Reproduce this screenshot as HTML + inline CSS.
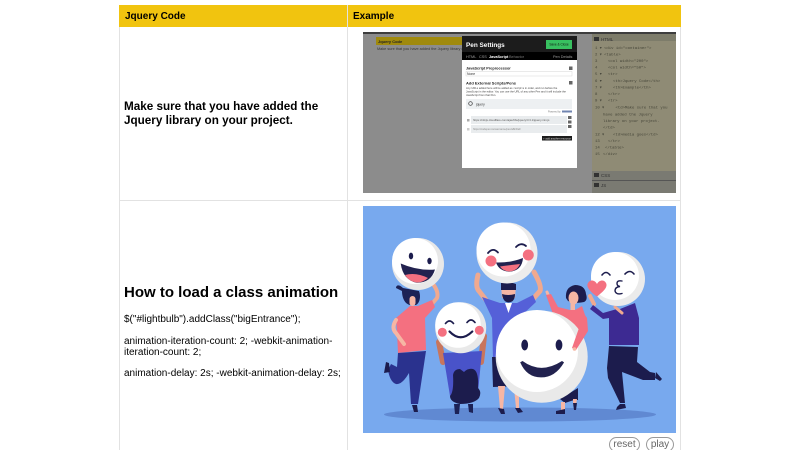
<!DOCTYPE html>
<html><head><meta charset="utf-8"><style>
html,body{margin:0;padding:0;background:#fff;width:800px;height:450px;overflow:hidden}
body{font-family:"Liberation Sans",sans-serif;color:#000;position:relative}
.a{position:absolute;white-space:nowrap}
.btn{position:absolute;border:1px solid #999;border-radius:10px;color:#666;font-size:10px;line-height:14px;height:13px;text-align:center;top:437px;box-sizing:content-box}
</style></head><body>
<div class="a" style="left:119px;top:5px;width:562px;height:22px;background:#f1c40f"></div>
<div class="a" style="left:347px;top:5px;width:1px;height:445px;background:#e2e2e2"></div>
<div class="a" style="left:119px;top:27px;width:1px;height:423px;background:#e2e2e2"></div>
<div class="a" style="left:680px;top:27px;width:1px;height:423px;background:#e2e2e2"></div>
<div class="a" style="left:119px;top:200px;width:562px;height:1px;background:#e2e2e2"></div>
<div class="a" style="left:125px;top:10px;font-size:10px;font-weight:bold;line-height:14px">Jquery Code</div>
<div class="a" style="left:353px;top:10px;font-size:10px;font-weight:bold;line-height:14px">Example</div>
<div class="a" style="left:124px;top:100px;font-size:11.7px;font-weight:bold;line-height:14px">Make sure that you have added the<br>Jquery library on your project.</div>
<div class="a" style="left:124px;top:283px;font-size:15px;font-weight:bold;line-height:20px">How to load a class animation</div>
<div class="a" style="left:124px;top:313px;font-size:10px;line-height:13px">$("#lightbulb").addClass("bigEntrance");</div>
<div class="a" style="left:124px;top:335.500px;font-size:10px;line-height:11px">animation-iteration-count: 2; -webkit-animation-<br>iteration-count: 2;</div>
<div class="a" style="left:124px;top:366.500px;font-size:10px;line-height:13px">animation-delay: 2s; -webkit-animation-delay: 2s;</div>

<svg class="a" style="left:0;top:0" width="800" height="450" viewBox="0 0 800 450">
<defs>
<filter id="b1" x="-5%" y="-5%" width="110%" height="110%"><feGaussianBlur stdDeviation="0.35"/></filter>
<filter id="b2" x="-5%" y="-5%" width="110%" height="110%"><feGaussianBlur stdDeviation="0.35"/></filter>
</defs>

<g filter="url(#b1)">
<rect x="363" y="32" width="313" height="161" fill="#8c8c8c"/>
<rect x="363" y="32" width="313" height="2" fill="#3c3c3c"/>
<rect x="376" y="37" width="87" height="8" fill="#a08a10"/>
<text x="378" y="43" font-size="4" font-weight="bold" fill="#222">Jquery Code</text>
<text x="377" y="50" font-size="3.8" fill="#333">Make sure that you have added the Jquery library on</text>
<rect x="592" y="34" width="84" height="159" fill="#8f8b74"/>
<rect x="592" y="34" width="84" height="7" fill="#7d7b6a"/>
<rect x="594" y="37" width="5" height="4" fill="#333"/>
<text x="601" y="41" font-size="4.5" fill="#333">HTML</text>
<g font-family="Liberation Mono,monospace" font-size="3.95" fill="#45453a">
<text x="595" y="49">1 ▾ &lt;div id="container"&gt;</text>
<text x="595" y="55.500">2 ▾ &lt;table&gt;</text>
<text x="595" y="62">3</text><text x="608" y="62">&lt;col width="200"&gt;</text>
<text x="595" y="68.500">4</text><text x="608" y="68.500">&lt;col width="50"&gt;</text>
<text x="595" y="75">5 ▾</text><text x="608" y="75">&lt;tr&gt;</text>
<text x="595" y="82">6 ▾</text><text x="613" y="82">&lt;th&gt;Jquery Code&lt;/th&gt;</text>
<text x="595" y="88.500">7 ▾</text><text x="613" y="88.500">&lt;th&gt;Example&lt;/th&gt;</text>
<text x="595" y="95">8</text><text x="608" y="95">&lt;/tr&gt;</text>
<text x="595" y="101.500">9 ▾</text><text x="608" y="101.500">&lt;tr&gt;</text>
<text x="595" y="108.500">10 ▾</text><text x="615.500" y="108.500">&lt;td&gt;Make sure that you</text>
<text x="603" y="115.500">have added the Jquery</text>
<text x="603" y="122">library on your project.</text>
<text x="603" y="128.500">&lt;/td&gt;</text>
<text x="595" y="135.500">12 ▾</text><text x="613" y="135.500">&lt;td&gt;media goes&lt;/td&gt;</text>
<text x="595" y="142">13</text><text x="608" y="142">&lt;/tr&gt;</text>
<text x="595" y="148.500">14</text><text x="605" y="148.500">&lt;/table&gt;</text>
<text x="595" y="155">15</text><text x="603" y="155">&lt;/div&gt;</text>
</g>
<rect x="592" y="171" width="84" height="9" fill="#7a7a72"/>
<rect x="592" y="180" width="84" height="1" fill="#555"/>
<rect x="592" y="181" width="84" height="12" fill="#7a7a72"/>
<rect x="594" y="173" width="5" height="4" fill="#333"/>
<rect x="594" y="183" width="5" height="4" fill="#333"/>
<text x="601" y="177" font-size="4.5" fill="#333">CSS</text>
<text x="601" y="187" font-size="4.5" fill="#333">JS</text>

<rect x="462" y="36" width="115" height="132" fill="#fff"/>
<rect x="462" y="36" width="115" height="24" fill="#1a1a1a"/>
<rect x="462" y="52" width="115" height="8" fill="#050505"/>
<text x="466" y="47" font-size="6.400" font-weight="bold" fill="#fff">Pen Settings</text>
<rect x="546" y="40" width="26" height="9" fill="#38c060"/>
<text x="559" y="45.500" font-size="3.200" text-anchor="middle" fill="#111">Save &amp; Close</text>
<g font-size="3.800" fill="#999"><text x="466" y="58">HTML</text><text x="479" y="58">CSS</text><text x="489" y="58" fill="#fff" font-weight="bold">JavaScript</text><text x="509" y="58" fill="#777">Behavior</text><text x="553" y="58">Pen Details</text></g>
<text x="466" y="69.500" font-size="3.800" font-weight="bold" fill="#222">JavaScript Preprocessor</text>
<rect x="569" y="66.500" width="3.500" height="3.500" fill="#666"/>
<rect x="466" y="71.500" width="106" height="4.500" fill="#fff" stroke="#ccc" stroke-width=".4"/>
<text x="467" y="75" font-size="3.400" fill="#333">None</text>
<text x="466" y="84.500" font-size="4" font-weight="bold" fill="#222">Add External Scripts/Pens</text>
<rect x="569" y="81" width="3.500" height="3.500" fill="#666"/>
<g font-size="2.700" fill="#444"><text x="466" y="89">Any URLs added here will be added as &lt;script&gt;s in order, and run before the</text><text x="466" y="92.500">JavaScript in the editor. You can use the URL of any other Pen and it will include the</text><text x="466" y="96">JavaScript from that Pen.</text></g>
<rect x="466" y="99" width="106" height="10" fill="#edf0f2"/>
<circle cx="470.500" cy="103.500" r="1.800" fill="none" stroke="#333" stroke-width=".7"/>
<text x="476" y="105.500" font-size="3.200" fill="#333">jquery</text>
<text x="548" y="112.500" font-size="2.400" fill="#777">Powered by</text><rect x="562" y="110.500" width="10" height="2" fill="#6f84b0"/>
<rect x="471" y="116" width="96" height="8" fill="#e9ecee"/>
<text x="473" y="121" font-size="2.800" fill="#555">https://cdnjs.cloudflare.com/ajax/libs/jquery/3.3.1/jquery.min.js</text>
<rect x="467" y="119" width="2.500" height="2.500" fill="#aaa"/>
<rect x="568" y="116" width="3.500" height="3" fill="#666"/><rect x="568" y="120.500" width="3.500" height="3" fill="#666"/>
<rect x="471" y="125" width="96" height="8" fill="#e9ecee"/>
<text x="473" y="130" font-size="2.600" fill="#888">https://codepen.io/username/pen/aBcDeF</text>
<rect x="467" y="128" width="2.500" height="2.500" fill="#ccc"/>
<rect x="568" y="125" width="3.500" height="3" fill="#666"/>
<rect x="542" y="136" width="30" height="4.500" fill="#1a1a1a"/>
<text x="557" y="139.500" font-size="2.700" text-anchor="middle" fill="#ddd">+ add another resource</text>
</g>

<g filter="url(#b2)">
<rect x="363" y="206" width="313" height="227" fill="#78a9ee"/>
<ellipse cx="520" cy="414.500" rx="136" ry="7" fill="#6189d2"/>

<!-- person 1 -->
<path d="M433 284Q439 292 437 298L431 305" fill="none" stroke="#f0a98f" stroke-width="4" stroke-linecap="round"/>
<path d="M403 288C399 284 396 285 396 288L402 291C402 298 405 304 410 305L416 305C420 303 421 296 419 291Z" fill="#1e2056"/>
<rect x="409.500" y="296" width="6" height="10" rx="3" fill="#f6b6a4"/>
<path d="M396 318L410 306L418 306L432 300L435 307L425 318L426 350L398 353L397 332Z" fill="#f46f80"/>
<path d="M396 320Q391 328 396 333L404 344" fill="none" stroke="#f6b6a4" stroke-width="4" stroke-linecap="round"/>
<path d="M398 353L426 351L418 404L411 404L409 373Q402 385 396 384Q390 382 388 370L391 364L397 367Z" fill="#2b328e"/>
<path d="M386 362L389 363L390 372L384 373Z" fill="#1e1f4d"/>
<path d="M412 405L417 405L418 412L414 412Z" fill="#1e1f4d"/>
<!-- face 1 -->
<circle cx="418" cy="264" r="26" fill="#e8e8e8"/>
<circle cx="415" cy="261" r="23" fill="#fff"/>
<ellipse cx="411" cy="256" rx="2.200" ry="3.400" fill="#1e1f4d"/>
<ellipse cx="429.500" cy="261" rx="2.200" ry="3.200" fill="#1e1f4d"/>
<path d="M400.700 263.500Q418 271 435 269.500Q431 283 416.500 282.700Q403 280 400.700 263.500Z" fill="#22244f"/>
<path d="M405 275Q416 272 428 278Q423 282.500 416.500 282.500Q409 281.500 405 275Z" fill="#f46f80"/>

<!-- centre man -->
<path d="M478 275Q475 287 479 291L486 300" fill="none" stroke="#f0a98f" stroke-width="5" stroke-linecap="round"/>
<path d="M534 272Q542 286 540 291L532 300" fill="none" stroke="#f0a98f" stroke-width="5" stroke-linecap="round"/>
<path d="M482 297L500 303L517 303L533 295L536 302L520 317L520 392L493 360L492 318Z" fill="#5460d8"/>
<path d="M505 303L508.500 313L512 303Z" fill="#fff"/>
<path d="M492 357L520 357L520 386L493 387Z" fill="#1e1f4d"/>
<path d="M498 386L505 386L503 409L500 409Z" fill="#f6b6a4"/>
<path d="M514 388L519 388L519 408L516 408Z" fill="#f6b6a4"/>
<path d="M498 408L504 409L505 414L501 414Z" fill="#1e1f4d"/>
<path d="M515 408L520 408L523 412L518 413Z" fill="#1e1f4d"/>
<path d="M501 285L516 285L515 298L502 298Z" fill="#f6b6a4"/>
<path d="M501 283Q508 281 516 284L516 290L501 290Z" fill="#1e1f4d"/>
<path d="M502 294Q508 296 515 294Q515 302 508.500 302.500Q503 302 502 294Z" fill="#1e1f4d"/>
<!-- face 2 -->
<circle cx="507" cy="253" r="30.500" fill="#ececec"/>
<circle cx="503.500" cy="249.500" r="27" fill="#fff"/>
<path d="M488 253Q493 247 498 252.500" fill="none" stroke="#1e1f4d" stroke-width="1.800" stroke-linecap="round"/>
<path d="M516 247Q521 242 526 246" fill="none" stroke="#1e1f4d" stroke-width="1.800" stroke-linecap="round"/>
<path d="M496 262.500Q510 263 523 258Q522 271 509 271.700Q499 271 496 262.500Z" fill="#22244f"/>
<path d="M500 266.500Q510 265 520 264Q517 271 509 271.500Q503 271 500 266.500Z" fill="#f46f80"/>
<circle cx="491" cy="261" r="5.500" fill="#f46f80"/>
<circle cx="528.300" cy="255" r="5.500" fill="#f46f80"/>

<!-- small person -->
<path d="M439 342L443 362" stroke="#c8745c" stroke-width="6" stroke-linecap="round"/>
<path d="M484 336L481 362" stroke="#c8745c" stroke-width="6" stroke-linecap="round"/>
<path d="M443 353L482 351L478 392L450 396Z" fill="#4a52c9"/>
<path d="M453 375Q454 369 460 369L464 372Q468 368 473 369Q479 371 478 388Q482 392 479 398Q474 404 460 404Q450 402 450 396Q454 392 453 375Z" fill="#1e1f4d"/>
<path d="M454 404L460 404L459 414L455 414Z" fill="#1e2056"/>
<path d="M468 404L473 404L473 413L469 412Z" fill="#1e2056"/>
<!-- face 4 -->
<circle cx="460.700" cy="327.700" r="25.500" fill="#e9e9e9"/>
<circle cx="458" cy="325" r="22.800" fill="#fff"/>
<path d="M445.500 323.500Q449.500 318.500 453.500 323.500" fill="none" stroke="#1e1f4d" stroke-width="1.700" stroke-linecap="round"/>
<path d="M467 322.500Q471 317.500 475 322.500" fill="none" stroke="#1e1f4d" stroke-width="1.700" stroke-linecap="round"/>
<path d="M449.500 331.500Q460.500 343 472.300 331.500" fill="none" stroke="#1e1f4d" stroke-width="2.200" stroke-linecap="round"/>
<circle cx="442.300" cy="332.300" r="4.500" fill="#f46f80"/>
<circle cx="479.300" cy="330.300" r="4.500" fill="#f46f80"/>

<!-- woman -->
<path d="M547 292L549 297" stroke="#f6b6a4" stroke-width="3" stroke-linecap="round"/>
<path d="M566 298Q565 287 575 285Q585 285 586 294Q588 300 584 302Q578 303 574 303L568 301Z" fill="#1e1f4d"/>
<ellipse cx="573.500" cy="298" rx="5" ry="6.500" fill="#f6b6a4"/>
<rect x="570.500" y="303" width="4.500" height="8" fill="#f6b6a4"/>
<path d="M546 295L551 294L558 307L570 310L575 310L582 306L586 318L587 330L576 350L573 349L576 330L556 322Z" fill="#f46f80"/>
<path d="M560 399L578 388L578 400L574 400L565 403Z" fill="#1e1f4d"/>
<path d="M561 402L565 402L565 410L561 410Z" fill="#f6b6a4"/><path d="M573 399L577 399L576 405L573 405Z" fill="#f6b6a4"/>
<path d="M556 411L565 409L565 414L556 414Z" fill="#1e1f4d"/><path d="M573 403L577 403L576 410L574 410Z" fill="#1e1f4d"/>
<!-- face 5 -->
<circle cx="541.700" cy="356.700" r="46" fill="#e9e9e9"/>
<circle cx="537" cy="351" r="41" fill="#fff"/>
<ellipse cx="524.700" cy="345" rx="3.400" ry="5.500" fill="#1e1f4d"/>
<ellipse cx="559" cy="345" rx="3.400" ry="5.500" fill="#1e1f4d"/>
<path d="M520.700 362.500L522.500 361.500Q541 375 562 361.500L563.500 362.500Q555 377 541 377Q527 377 520.700 362.500Z" fill="#22244f" stroke="#22244f" stroke-width=".8"/>
<path d="M580 308L587 318L588 331L576 350L572 348L579 328Z" fill="#f46f80"/>
<circle cx="574.500" cy="349" r="1.800" fill="#f6b6a4"/>

<!-- right man -->
<path d="M590 296L594 304" stroke="#f0a98f" stroke-width="4" stroke-linecap="round"/>
<path d="M593 305L603 313L617 309L621 316L603 319L590 309Z" fill="#3e2c92"/>
<path d="M610 313L635 303L639 318L639 345L609 345L609 318Z" fill="#3e2c92"/>
<path d="M609 346L638 347L637 362L650 372L655 373L655 380L643 380L622 372L625 403L620 403L608 378L607 368Z" fill="#1e1f4d"/>
<path d="M656 372L662 379L660 381L655 378Z" fill="#1e1f4d"/>
<path d="M620 404L625 404L626 408L616 410L617 407Z" fill="#1e1f4d"/>
<path d="M615 307L622 313" fill="none" stroke="#f0a98f" stroke-width="3" stroke-linecap="round"/>
<!-- face 3 -->
<circle cx="618" cy="279" r="27" fill="#ebebeb"/>
<circle cx="615" cy="276" r="24" fill="#fff"/>
<path d="M602 275Q606 270 610 275" fill="none" stroke="#1e1f4d" stroke-width="1.600" stroke-linecap="round"/>
<path d="M625 274Q630 269 634 274" fill="none" stroke="#1e1f4d" stroke-width="1.600" stroke-linecap="round"/>
<path d="M622 281Q617 280 617 283.500Q617 286 620 286.500Q615 287 615 291Q616 295 622 293.500" fill="none" stroke="#1e1f4d" stroke-width="1.400" stroke-linecap="round"/>
<path d="M597 296.500C589 291 586 286 588 283C590 279 595 280 597 284C599 280 604 279 606 283C608 287 604 291 597 296.500Z" fill="#f46f80"/>
</g>
</svg>
<div class="btn" style="left:609px;width:29px">reset</div>
<div class="btn" style="left:646px;width:26px">play</div>
</body></html>
